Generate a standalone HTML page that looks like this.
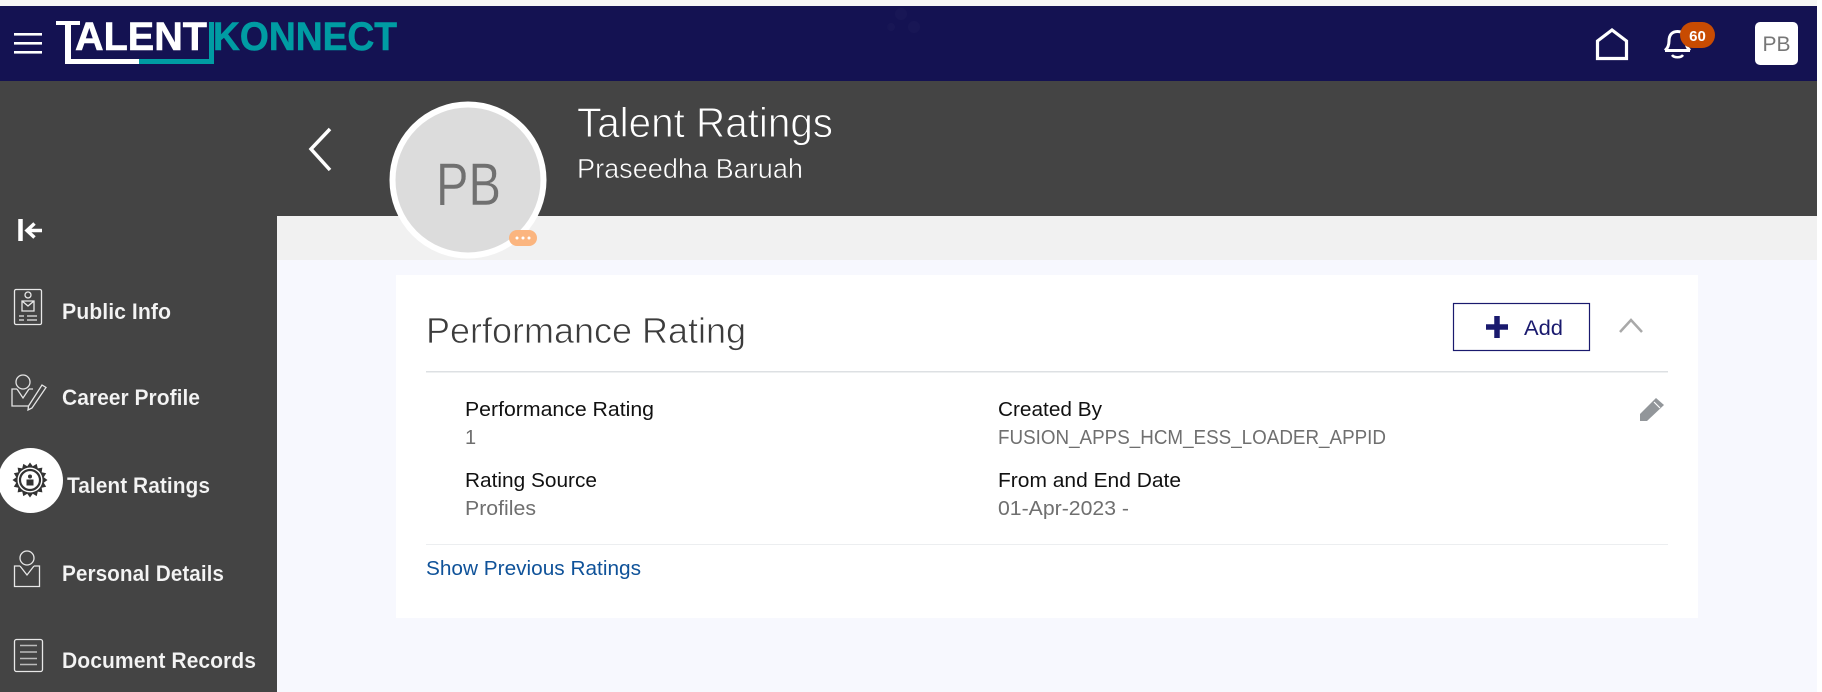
<!DOCTYPE html>
<html><head><meta charset="utf-8"><title>Talent Ratings</title>
<style>
html,body{margin:0;padding:0;background:#fff;width:1822px;height:692px;overflow:hidden}
svg{display:block}
text{font-family:"Liberation Sans",sans-serif}
.nav{font-weight:700;font-size:22px;fill:#f4f4f4;stroke:#444;stroke-width:.12px}
.lab{font-size:20px;fill:#111}
.val{font-size:20px;fill:#6f6f6f}
</style></head><body>
<svg width="1822" height="692" viewBox="0 0 1822 692" xmlns="http://www.w3.org/2000/svg">
<rect width="1822" height="692" fill="#fff"/>
<rect width="1817" height="6" fill="#f6f6f6"/>
<rect x="0" y="81" width="277" height="611" fill="#444"/>
<rect x="277" y="81" width="1540" height="135" fill="#444"/>
<rect x="277" y="216" width="1540" height="44" fill="#f1f1f1"/>
<rect x="277" y="260" width="1540" height="432" fill="#f7f8fe"/>
<rect x="0" y="6" width="1817" height="75" fill="#141252"/>
<!-- hamburger -->
<g fill="#fff"><rect x="14" y="33" width="28" height="2.600"/><rect x="14" y="42" width="28" height="2.600"/><rect x="14" y="51" width="28" height="2.600"/></g>
<!-- logo -->
<path d="M56 21H80V25H71V59H139V64H65V25H56Z" fill="#fff"/>
<path d="M139 59H209V22H214V64H139Z" fill="#009ca3"/>
<text x="75" y="50" font-size="40" font-weight="700" fill="#fff" stroke="#fff" stroke-width=".6" textLength="132" lengthAdjust="spacingAndGlyphs">ALENT</text>
<text x="213" y="50" font-size="40" font-weight="700" fill="#009ca3" stroke="#009ca3" stroke-width=".6" textLength="184" lengthAdjust="spacingAndGlyphs">KONNECT</text>
<!-- faint spinner -->
<g fill="#fff" opacity=".015"><circle cx="901" cy="14" r="6"/><circle cx="914" cy="27" r="6"/><circle cx="891" cy="27" r="4"/></g>
<!-- home -->
<path d="M1597.500 58.500V41L1612 30L1626.500 41V58.500Z" fill="none" stroke="#fff" stroke-width="3.200"/>
<!-- bell -->
<path d="M1665 50.500H1690M1665 50.500C1668 48 1669 45 1669 41C1669 35 1672 31.500 1677.500 31.500C1683 31.500 1686 35 1686 41C1686 45 1687 48 1690 50.500" fill="none" stroke="#fff" stroke-width="3"/>
<path d="M1672 55C1674 58 1681 58 1683 55" fill="none" stroke="#fff" stroke-width="2.500"/>
<rect x="1680" y="22" width="35" height="26" rx="13" fill="#c84b02"/>
<text x="1697.500" y="41" font-size="15" font-weight="700" fill="#fff" text-anchor="middle">60</text>
<!-- user -->
<rect x="1755" y="22" width="43" height="43" rx="5" fill="#fff"/>
<text x="1776.500" y="51" font-size="21" fill="#777" text-anchor="middle">PB</text>
<!-- back -->
<path d="M330 129L311 149L330 170" fill="none" stroke="#fff" stroke-width="3.500"/>
<!-- avatar -->
<circle cx="468" cy="180" r="75.500" fill="#dcdcdc" stroke="#fff" stroke-width="6"/>
<text x="436" y="205" font-size="60" fill="#707070" stroke="#dcdcdc" stroke-width=".4" textLength="65" lengthAdjust="spacingAndGlyphs">PB</text>
<rect x="509" y="230" width="28" height="16" rx="8" fill="#fbb57f"/>
<g fill="#fff"><circle cx="517" cy="238" r="1.500"/><circle cx="523" cy="238" r="1.500"/><circle cx="529" cy="238" r="1.500"/></g>
<text x="577" y="137" font-size="42" fill="#fff" stroke="#444" stroke-width=".9" textLength="256" lengthAdjust="spacingAndGlyphs">Talent Ratings</text>
<text x="577" y="178" font-size="28" fill="#fff" stroke="#444" stroke-width=".55" textLength="226" lengthAdjust="spacingAndGlyphs">Praseedha Baruah</text>
<!-- collapse -->
<path d="M20.500 219V241" stroke="#fff" stroke-width="4.500"/>
<path d="M42 230.500H28M34.500 223.500L27 230.500L34.500 237.500" fill="none" stroke="#fff" stroke-width="3.500"/>
<!-- public info icon -->
<g fill="none" stroke="#e8e8e8" stroke-width="1.300">
<rect x="14.500" y="289.500" width="27" height="35" rx="1.500"/>
<circle cx="28" cy="295" r="3"/>
<path d="M22 301H34V311H22ZM22 301L28 306L34 301M19 316H24M27 316H37M19 320H24M27 320H37"/>
</g>
<text class="nav" x="62" y="319" textLength="109" lengthAdjust="spacingAndGlyphs">Public Info</text>
<!-- career icon -->
<g fill="none" stroke="#e4e4e4" stroke-width="1.300">
<circle cx="23" cy="382" r="7"/>
<path d="M17 389H12V406H29M29 389H33M17 389L23 398L29 389"/>
<path d="M42 385L46 387.500L32 408L28 410L28.500 406Z"/>
</g>
<text class="nav" x="62" y="405" textLength="138" lengthAdjust="spacingAndGlyphs">Career Profile</text>
<!-- talent active -->
<circle cx="30.500" cy="480.500" r="32.500" fill="#fff"/>
<g transform="translate(30 480)">
<polygon fill="#333" points="17.500,0 13.730,2.730 16.170,6.700 11.640,7.780 12.370,12.370 7.780,11.640 6.700,16.170 2.730,13.730 0,17.500 -2.730,13.730 -6.700,16.170 -7.780,11.640 -12.370,12.370 -11.640,7.780 -16.170,6.700 -13.730,2.730 -17.500,0 -13.730,-2.730 -16.170,-6.700 -11.640,-7.780 -12.370,-12.370 -7.780,-11.640 -6.700,-16.170 -2.730,-13.730 0,-17.500 2.730,-13.730 6.700,-16.170 7.780,-11.640 12.370,-12.370 11.640,-7.780 16.170,-6.700 13.730,-2.730"/>
<circle r="12.500" fill="#fff"/>
<circle r="10" fill="#fff" stroke="#333" stroke-width="2.200"/>
<circle cx="0" cy="-3.500" r="2" fill="#333"/>
<rect x="-3.500" y="-.5" width="7" height="6" fill="#333"/>
</g>
<text class="nav" x="67" y="493" textLength="143" lengthAdjust="spacingAndGlyphs">Talent Ratings</text>
<!-- personal -->
<g fill="none" stroke="#e8e8e8" stroke-width="1.300">
<circle cx="27" cy="558" r="7"/>
<path d="M20 566H14.500V586.500H39.500V566H34M20 566L27 575L34 566"/>
</g>
<text class="nav" x="62" y="581" textLength="162" lengthAdjust="spacingAndGlyphs">Personal Details</text>
<!-- document -->
<rect x="14.500" y="639.500" width="28" height="32" rx="2" fill="none" stroke="#e8e8e8" stroke-width="1.300"/>
<path d="M20 645.500H37M20 652H37M20 658.500H37M20 664.500H37" stroke="#bbb" stroke-width="1.500"/>
<text class="nav" x="62" y="668" textLength="194" lengthAdjust="spacingAndGlyphs">Document Records</text>
<!-- card -->
<rect x="396" y="275" width="1302" height="343" fill="#fff"/>
<text x="426" y="343" font-size="36" fill="#3c3c3c" stroke="#fff" stroke-width=".7" textLength="320" lengthAdjust="spacingAndGlyphs">Performance Rating</text>
<rect x="1453.500" y="303.500" width="136" height="47" fill="#fff" stroke="#1a1a6e" stroke-width="1.200"/>
<path d="M1486 327H1508M1497 316V338" stroke="#1a1a6e" stroke-width="5.500"/>
<text x="1524" y="335" font-size="21" fill="#1a1a6e" textLength="39" lengthAdjust="spacingAndGlyphs">Add</text>
<path d="M1620 332L1631 320L1642 332" fill="none" stroke="#a9a9a9" stroke-width="2.500"/>
<rect x="426" y="371" width="1242" height="1.500" fill="#dde0e3"/>
<path d="M1640 421V414L1656 398L1664 405L1647 421Z" fill="#92969a"/>
<path d="M1654 402L1660 408" stroke="#fff" stroke-width="1.200"/>
<text class="lab" x="465" y="416" textLength="189" lengthAdjust="spacingAndGlyphs">Performance Rating</text>
<text class="val" x="465" y="444">1</text>
<text class="lab" x="465" y="487" textLength="132" lengthAdjust="spacingAndGlyphs">Rating Source</text>
<text class="val" x="465" y="515" textLength="71" lengthAdjust="spacingAndGlyphs">Profiles</text>
<text class="lab" x="998" y="416" textLength="104" lengthAdjust="spacingAndGlyphs">Created By</text>
<text class="val" x="998" y="444" textLength="388" lengthAdjust="spacingAndGlyphs">FUSION_APPS_HCM_ESS_LOADER_APPID</text>
<text class="lab" x="998" y="487" textLength="183" lengthAdjust="spacingAndGlyphs">From and End Date</text>
<text class="val" x="998" y="515" textLength="131" lengthAdjust="spacingAndGlyphs">01-Apr-2023 -</text>
<rect x="426" y="544" width="1242" height="1" fill="#eceef0"/>
<text x="426" y="575" font-size="20" fill="#0f5299" textLength="215" lengthAdjust="spacingAndGlyphs">Show Previous Ratings</text>
</svg>
</body></html>
